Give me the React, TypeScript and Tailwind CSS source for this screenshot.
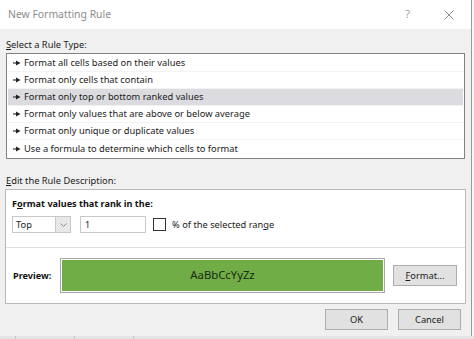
import { ReactNode } from "react";

const rules = [
  "Format all cells based on their values",
  "Format only cells that contain",
  "Format only top or bottom ranked values",
  "Format only values that are above or below average",
  "Format only unique or duplicate values",
  "Use a formula to determine which cells to format",
];

const Pointer = () => (
  <svg width="8" height="6" viewBox="0 0 8 6" className="mr-[3px] shrink-0">
    <path d="M0 3 H4" stroke="#222" strokeWidth="1.1" />
    <path d="M3 0.5 L7.5 3 L3 5.5 Z" fill="#222" />
  </svg>
);

const Btn = ({ children, className }: { children: ReactNode; className?: string }) => (
  <div
    className={`flex h-[21px] items-center justify-center border border-[#adadad] bg-[#e1e1e1] text-[9.3px] text-[#1a1a1a] ${className ?? ""}`}
  >
    {children}
  </div>
);

export default function App() {
  return (
    <div className="flex h-[339px] w-[474px] flex-col overflow-hidden bg-[#f7f7f7] font-['Noto_Sans','Open_Sans',sans-serif]">
      <div className="flex h-[336px] w-[472px] flex-col border-r border-[#9a9a9a] bg-[#f0f0f0]">
        {/* title bar */}
        <div className="flex h-[29px] shrink-0 items-center bg-white pl-[8px] pr-[17px]">
          <span className="text-[10.4px] text-[#8c8c8c]">New Formatting Rule</span>
          <span className="ml-auto mr-[34px] text-[11px] text-[#a0a0a0]">?</span>
          <svg width="10" height="10" viewBox="0 0 10 10">
            <path d="M0.5 0.5 L9.5 9.5 M9.5 0.5 L0.5 9.5" stroke="#8c8c8c" strokeWidth="1" />
          </svg>
        </div>

        <div className="flex flex-col px-[5px]">
          <div className="mt-[7px] h-[17px] pl-[1px] text-[9.3px] leading-[17px] text-[#1a1a1a]">
            <span className="underline">S</span>elect a Rule Type:
          </div>

          <div className="mx-[1px] border border-[#828282] bg-white p-[1px]">
            {rules.map((r, i) => (
              <div
                key={r}
                className={`flex h-[17px] items-center border-b border-[#f3f3f3] pl-[5px] text-[9.3px] text-[#1a1a1a] last:border-b-0 ${
                  i === 2 ? "bg-[#dcdce0]" : ""
                }`}
              >
                <Pointer />
                {r}
              </div>
            ))}
          </div>

          <div className="mt-[13px] h-[17px] pl-[1px] text-[9.3px] leading-[17px] text-[#1a1a1a]">
            <span className="underline">E</span>dit the Rule Description:
          </div>

          <div className="flex flex-col border border-[#b9b9b9] bg-white">
            <div className="flex h-[58px] flex-col border-b border-[#dedede] px-[6px] pt-[6px]">
              <div className="text-[9.1px] font-bold leading-[15px] text-[#111]">
                F<span className="underline">o</span>rmat values that rank in the:
              </div>
              <div className="mt-[5px] flex items-center">
                <div className="flex h-[17px] w-[59px] border border-[#c8c8c8] bg-white">
                  <span className="flex-1 pl-[3px] text-[9.3px] leading-[15px] text-[#1a1a1a]">Top</span>
                  <div className="flex w-[15px] items-center justify-center border-l border-[#c8c8c8] bg-[#e8e8e8]">
                    <svg width="7" height="4" viewBox="0 0 7 4">
                      <path d="M0.5 0.5 L3.5 3.5 L6.5 0.5" stroke="#888" fill="none" />
                    </svg>
                  </div>
                </div>
                <div className="ml-[9px] h-[17px] w-[66px] border border-[#c8c8c8] pl-[4px] text-[9px] leading-[15px] text-[#1a1a1a]">
                  1
                </div>
                <div className="ml-[7px] h-[13px] w-[13px] border border-[#333] bg-white" />
                <span className="ml-[6px] text-[9.3px] text-[#1a1a1a]">
                  % of the selected ran<span className="underline">g</span>e
                </span>
              </div>
            </div>

            <div className="flex h-[55px] items-center px-[7px]">
              <span className="w-[47px] text-[9.1px] font-bold text-[#111]">Preview:</span>
              <div className="h-[35px] w-[325px] border border-[#a8a8a8] bg-white p-[1px]">
                <div className="flex h-full items-center justify-center bg-[#70ad47] text-[11.3px] text-[#1a2a12]">
                  AaBbCcYyZz
                </div>
              </div>
              <Btn className="ml-[8px] w-[64px]">
                <span className="underline">F</span>ormat...
              </Btn>
            </div>
          </div>

          <div className="mt-[5px] flex justify-end pr-[5px]">
            <Btn className="w-[63px]">OK</Btn>
            <Btn className="ml-[10px] w-[63px]">Cancel</Btn>
          </div>
        </div>
      </div>
      <div className="flex h-[3px] bg-[#e4e4e4]">
        <div className="w-[16px] border-r border-[#c8c8c8]" />
        <div className="w-[59px] border-r border-[#c8c8c8]" />
        <div className="w-[59px] border-r border-[#c8c8c8]" />
      </div>
    </div>
  );
}
